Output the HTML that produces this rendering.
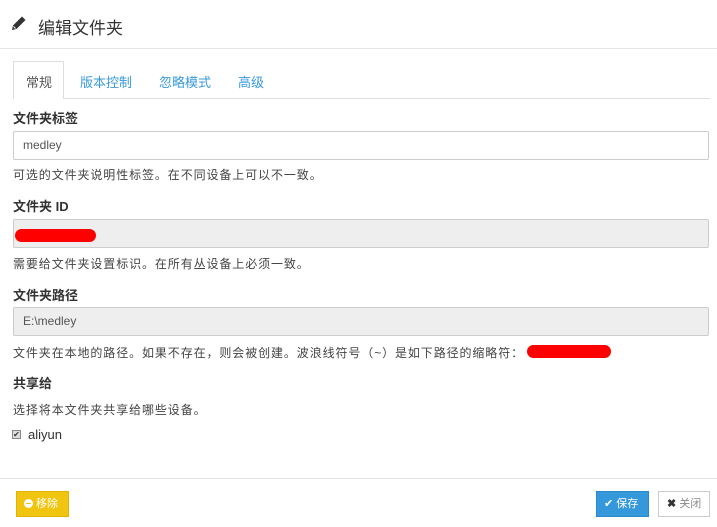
<!DOCTYPE html><html><head><meta charset="utf-8"><style>
*{box-sizing:border-box;margin:0;padding:0}
body{width:717px;height:527px;background:#fff;font-family:"Liberation Sans","Noto Sans CJK SC",sans-serif;color:#333;position:relative;overflow:hidden;font-size:12px}
.a{position:absolute}
.lbl{font-weight:bold;font-size:13px;left:13px}
.inp{left:13px;width:696px;height:29px;border:1px solid #ccc;border-radius:2px;padding:0 9px;line-height:27px;font-size:12px;color:#555}
.dis{background:#eee}
.help{left:13px;font-size:12px;color:#444;letter-spacing:0.9px}
</style></head><body>
<svg class="a" style="left:11px;top:15px" width="16" height="16" viewBox="0 0 16 16"><path d="M11 1.5l3.5 3.5-9 9-4.5 1 1-4.5z" fill="#333"/><path d="M2.5 11.5l2 2" stroke="#fff" stroke-width="1"/></svg>
<div class="a" style="left:38px;top:14px;font-size:17px;color:#333">编辑文件夹</div>
<div class="a" style="left:0;top:48px;width:717px;height:1px;background:#e5e5e5"></div>
<div class="a" style="left:13px;top:98px;width:697px;height:1px;background:#ddd"></div>
<div class="a" style="left:13px;top:61px;width:51px;height:38px;border:1px solid #ddd;border-bottom:none;background:#fff"></div>
<div class="a" style="left:26px;top:72px;font-size:13px;color:#555">常规</div>
<div class="a" style="left:80px;top:72px;font-size:13px;color:#3a9ad9">版本控制</div>
<div class="a" style="left:159px;top:72px;font-size:13px;color:#3a9ad9">忽略模式</div>
<div class="a" style="left:238px;top:72px;font-size:13px;color:#3a9ad9">高级</div>
<div class="a lbl" style="top:108px">文件夹标签</div>
<div class="a inp" style="top:131px">medley</div>
<div class="a help" style="top:166px">可选的文件夹说明性标签。在不同设备上可以不一致。</div>
<div class="a lbl" style="top:196px">文件夹 ID</div>
<div class="a inp dis" style="top:219px"></div>
<div class="a" style="left:15px;top:229px;width:81px;height:13px;background:#f00;border-radius:7px"></div>
<div class="a help" style="top:255px">需要给文件夹设置标识。在所有丛设备上必须一致。</div>
<div class="a lbl" style="top:285px">文件夹路径</div>
<div class="a inp dis" style="top:307px">E:\medley</div>
<div class="a help" style="top:344px">文件夹在本地的路径。如果不存在，则会被创建。波浪线符号（~）是如下路径的缩略符：</div>
<div class="a" style="left:527px;top:345px;width:84px;height:13px;background:#f00;border-radius:7px"></div>
<div class="a lbl" style="top:373px">共享给</div>
<div class="a help" style="top:401px">选择将本文件夹共享给哪些设备。</div>
<div class="a" style="left:12px;top:430px;width:9px;height:9px;border:1px solid #888;background:#ddd;font-size:8px;line-height:7px;text-align:center">✔</div>
<div class="a" style="left:28px;top:427px;font-size:13px">aliyun</div>
<div class="a" style="left:0;top:478px;width:717px;height:1px;background:#e5e5e5"></div>
<div class="a" style="left:16px;top:491px;width:53px;height:26px;background:#f1c40f;border:1px solid #e0b400;color:#fff;font-size:11px;line-height:24px;padding-left:7px"><span style="display:inline-block;width:9px;height:9px;border-radius:50%;background:#fff;vertical-align:-1px;position:relative"><span style="position:absolute;left:2px;top:4px;width:5px;height:1px;background:#f1c40f"></span></span> 移除</div>
<div class="a" style="left:596px;top:491px;width:53px;height:26px;background:#3498db;border:1px solid #2a88c8;color:#fff;font-size:11px;line-height:24px;padding-left:7px">✔ 保存</div>
<div class="a" style="left:658px;top:491px;width:52px;height:26px;background:#fff;border:1px solid #ccc;color:#888;font-size:11px;line-height:24px;padding-left:8px"><b style="color:#333">✖</b> 关闭</div>
</body></html>
